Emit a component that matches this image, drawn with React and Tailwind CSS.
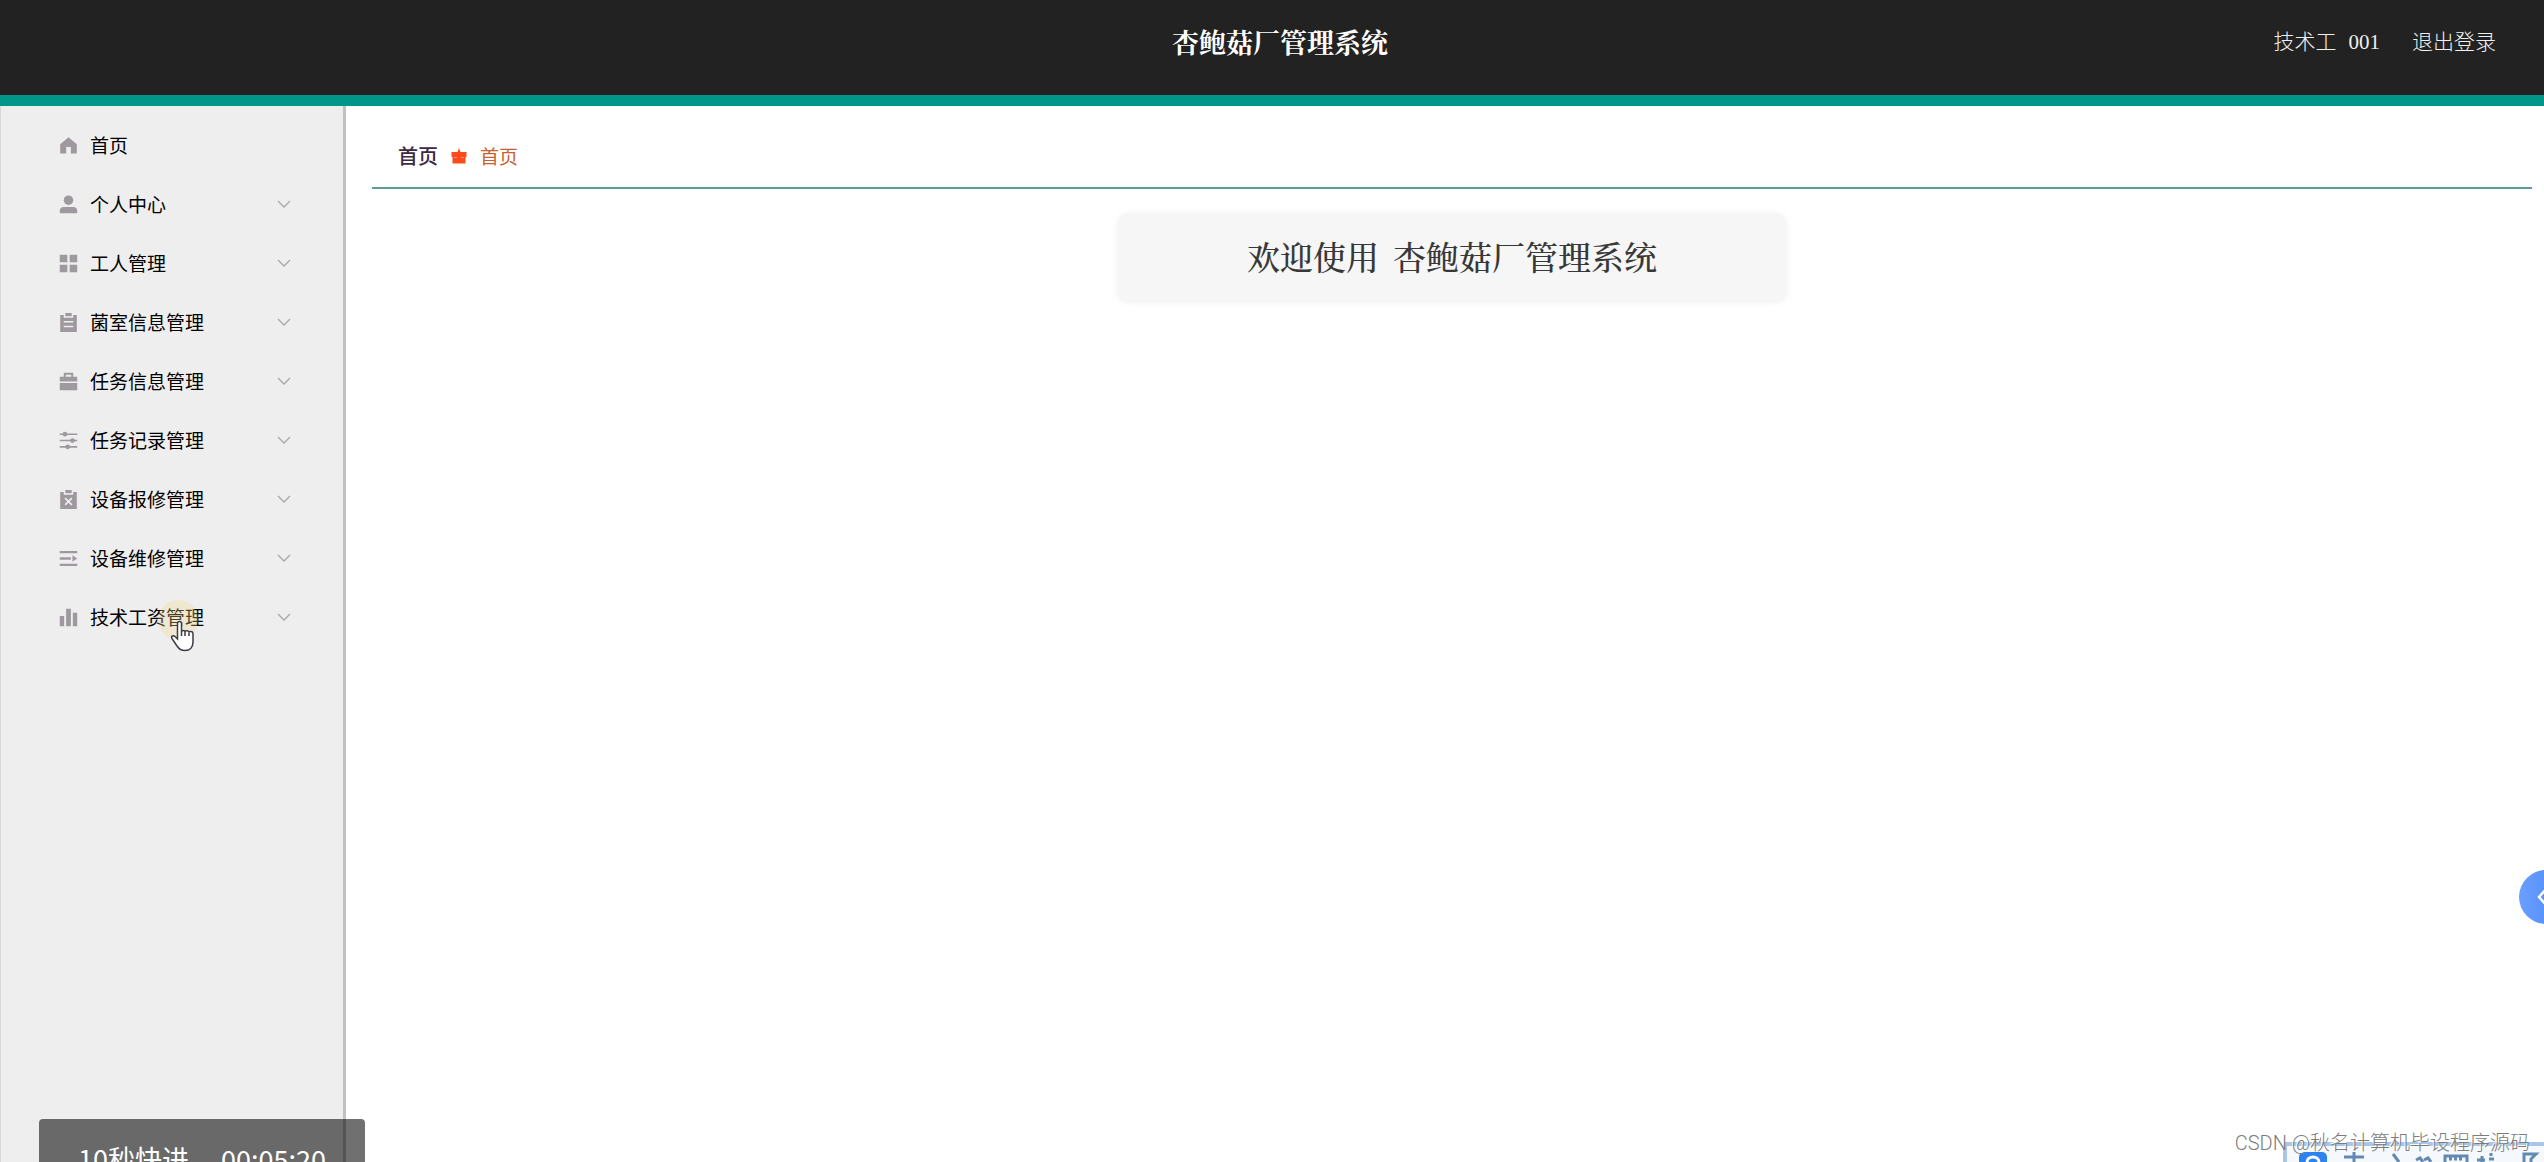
import React, { useState } from 'react';

const icons = {
  home: <path d="M12 1.500 1.500 10.500V22H9v-8h6v8h7.500V10.500z" />,
  user: (
    <>
      <circle cx="12" cy="6.500" r="6" />
      <path d="M1 23v-3c0-3 2-5 5-5h12c3 0 5 2 5 5v3z" />
    </>
  ),
  grid: <path d="M1 1h9.500v9.500H1zM13.500 1H23v9.500h-9.500zM1 13.500h9.500V23H1zM13.500 13.500H23V23h-9.500z" />,
  order: (
    <>
      <path d="M8 0h8v4H8z" />
      <path fillRule="evenodd" d="M1.500 2.500H6V6h12V2.500h4.500V24h-21zM6 10v2h12v-2zM6 16v2h12v-2z" />
    </>
  ),
  cooperation: (
    <path fillRule="evenodd" d="M6 6V1h12v5h5v6H1V6zM8.500 6h7V3.500h-7zM1 14h22v9H1z" />
  ),
  operation: (
    <>
      <path d="M1 3h22v2H1zM1 11h22v2H1zM1 19h22v2H1z" />
      <circle cx="7.500" cy="4" r="3" />
      <circle cx="17" cy="12" r="3" />
      <circle cx="11" cy="20" r="3" />
    </>
  ),
  release: (
    <>
      <path d="M8 0h8v4H8z" />
      <path
        fillRule="evenodd"
        d="M1.500 2.500H6V6h12V2.500h4.500V24h-21zM8.500 9.500 7 11l3.500 3.500L7 18l1.500 1.500L12 16l3.500 3.500L17 18l-3.500-3.500L17 11l-1.500-1.500L12 13z"
      />
    </>
  ),
  unfold: <path d="M1 2.500h22v3H1zM1 10.500h14v3H1zM17 8l6 4-6 4zM1 18.500h22v3H1z" />,
  histogram: <path d="M1 10h5.500v13H1zM9 1h6v22H9zM17.500 6H23v17h-5.500z" />,
};

const menus = [
  { name: '首页', icon: 'home' },
  { name: '个人中心', icon: 'user', children: true },
  { name: '工人管理', icon: 'grid', children: true },
  { name: '菌室信息管理', icon: 'order', children: true },
  { name: '任务信息管理', icon: 'cooperation', children: true },
  { name: '任务记录管理', icon: 'operation', children: true },
  { name: '设备报修管理', icon: 'release', children: true },
  { name: '设备维修管理', icon: 'unfold', children: true },
  { name: '技术工资管理', icon: 'histogram', children: true },
];

const Header = () => (
  <header className="relative flex h-[106px] shrink-0 items-start justify-center border-b-[11px] border-[#009688] bg-[#222222] pl-4">
    <h1 className='pt-[22px] font-["Noto_Serif_CJK_SC","Noto_Sans_CJK_SC",serif] text-[27px] leading-10 font-bold text-white'>
      杏鲍菇厂管理系统
    </h1>
    <div className='absolute top-[22px] right-12 flex items-center gap-8 font-["Liberation_Serif","Noto_Sans_CJK_SC",sans-serif] text-[21px] leading-10 font-light text-[#f0f0f0]'>
      <span className="flex gap-3">
        <span>技术工</span>
        <span>001</span>
      </span>
      <button type="button" className="cursor-pointer">
        退出登录
      </button>
    </div>
  </header>
);

// Hand pointer with its click halo
const Pointer = () => (
  <div className="pointer-events-none absolute top-3 left-[157px]">
    <div className="size-10 rounded-full bg-[#f5d78f]/30" />
    <svg viewBox="0 0 25 32" className="absolute top-5 left-3 h-8 w-[25px] fill-white stroke-[#3c3e46] stroke-[1.5]">
      <path d="M7.500 19V3.500a2 2 0 0 1 4 0V12c0-2 3.500-2 3.500 0 0-2 4-1.500 4 .5 0-1.500 4-1.500 4 1V22c0 5-3 8.500-8 8.500-4 0-6-1.500-8-4.500l-5-7.500c-1.500-2.500 1.500-3.500 3-2z" />
      <path d="M11.500 12v4M15 12v4M19 12.500V16" />
    </svg>
  </div>
);

const Sidebar = () => {
  const [active, setActive] = useState('技术工资管理');

  return (
    <aside className="w-[346px] shrink-0 border-r-[3px] border-l border-r-[#c0c1c4] border-l-[#d8d8d8] bg-[#eeeeee]">
      <ul className="pt-[10px]">
        {menus.map((item) => (
          <li key={item.name} className="relative">
            <button
              type="button"
              onClick={() => setActive(item.name)}
              className="flex h-[59px] w-full cursor-pointer items-center pr-[52px] pb-px pl-[58px] text-left text-[19px] text-black"
            >
              <svg viewBox="0 0 24 24" className="mr-3 size-[19px] shrink-0 fill-[#9e999e]">
                {icons[item.icon]}
              </svg>
              <span className="flex-1">{item.name}</span>
              {item.children && (
                <svg viewBox="0 0 14 14" className="size-[14px] fill-none stroke-[#a8a8ac] stroke-[1.3]">
                  <path d="M1 4l6 6 6-6" />
                </svg>
              )}
            </button>
            {active === item.name && <Pointer />}
          </li>
        ))}
      </ul>
    </aside>
  );
};

const Breadcrumb = () => (
  <nav className="flex h-[83px] items-center border-b-2 border-[#5a9f99] px-[26px] pt-[18px] leading-8">
    <a href="#home" className="text-[20px] font-medium text-[#3d2940]">
      首页
    </a>
    <svg viewBox="0 0 16 16" className="mx-[13px] size-4 fill-[#fb4b1c]">
      <path d="M.5 4H6.500L8 0l1.500 4h6v5h-1v6.500h-13V9h-1z" />
      <path d="M3 9.500h3M10 9.500h3" className="stroke-[#ff9a78]" />
    </svg>
    <a href="#home" className="text-[19px] text-[#c9602f]">
      首页
    </a>
  </nav>
);

const SideHandle = () => (
  <button
    type="button"
    aria-label="展开"
    className="absolute top-[870px] -right-[29px] flex size-[54px] cursor-pointer items-center rounded-full bg-linear-to-r from-[#6b9ffc] to-[#4585fb] pl-[18px]"
  >
    <svg viewBox="0 0 12 18" className="h-[18px] w-3 fill-none stroke-white stroke-[2.5]">
      <path d="M9 1 2 9l7 8" />
    </svg>
  </button>
);

const PlayerToast = () => (
  <div className="absolute bottom-0 left-[39px] flex h-[43px] w-[326px] justify-center gap-8 overflow-hidden rounded-t bg-black/56 pt-5 text-[27px] leading-10 text-white">
    <span>10秒快进</span>
    <span>00:05:20</span>
  </div>
);

// Input method bar peeking out of the bottom edge
const ImeBar = () => (
  <div className="absolute right-0 bottom-0 flex h-5 w-[261px] items-start gap-4 overflow-hidden rounded-tl-sm border-t-4 border-l-4 border-[#a9c6e6] bg-[#f5f9fd] pt-[6px] pl-3">
    <svg viewBox="0 0 28 10" className="h-[10px] w-7 shrink-0">
      <path d="M0 10V5a5 5 0 0 1 5-5h18a5 5 0 0 1 5 5v5z" className="fill-[#2b83f2]" />
      <path d="M8 10a6 5 0 0 1 12 0" className="fill-none stroke-white stroke-[3]" />
    </svg>
    <svg viewBox="0 0 200 10" className="h-[10px] w-[200px] shrink-0 fill-none stroke-[#6289b2] stroke-[3]">
      <path d="M1 5h20M11 0v10M50 2l6 8M73 8l4-2 3 4M81 8l4-2 3 4M134 8h8M139 4v6M148 1v3M146 7h5" />
      <path d="M102 10V4h22v6M106 7h3M111 7h3M116 7h3" />
      <path d="M181 10V2h12l-5 5v3" />
    </svg>
  </div>
);

const App = () => (
  <div className='relative flex min-h-screen flex-col overflow-hidden bg-white font-["Noto_Sans_CJK_SC",sans-serif]'>
    <Header />
    <div className="flex flex-1">
      <Sidebar />
      <main className="flex-1 pr-3 pl-[26px]">
        <Breadcrumb />
        <div className='mx-auto mt-6 flex h-[90px] w-[670px] items-center justify-center gap-[14px] rounded-xl bg-[#f6f6f6] pb-1 font-["Noto_Serif_CJK_SC","Noto_Sans_CJK_SC",serif] text-[33px] font-medium text-[#383838] shadow-[0_0_6px_rgba(0,0,0,0.05)]'>
          <span>欢迎使用</span>
          <span>杏鲍菇厂管理系统</span>
        </div>
      </main>
    </div>
    <SideHandle />
    <PlayerToast />
    <ImeBar />
    <p className='absolute right-[14px] bottom-[3px] font-["Roboto","Noto_Sans_CJK_SC",sans-serif] text-[20px] leading-8 font-light text-[#7c7c7c] [text-shadow:-1px_-1px_0_#ffffff]'>
      CSDN @秋名计算机毕设程序源码
    </p>
  </div>
);

export default App;
